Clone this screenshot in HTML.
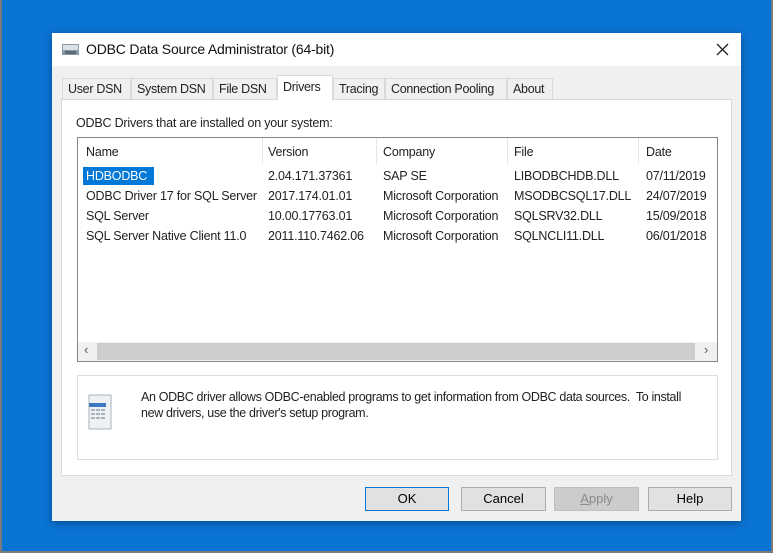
<!DOCTYPE html>
<html><head><style>
*{margin:0;padding:0;box-sizing:border-box}
body{width:773px;height:553px;background:#0a74d4;position:relative;overflow:hidden;font-family:"Liberation Sans",sans-serif;font-size:12.5px;color:#000}
.a{position:absolute}
.win{left:52px;top:33px;width:689px;height:488px;background:#f0f0f0;box-shadow:0 2px 8px rgba(0,0,0,.35)}
.title{left:0;top:0;width:689px;height:33px;background:#fff}
.tab{position:absolute;top:45px;height:21px;border:1px solid #d9d9d9;border-bottom:none;background:#f0f0f0;padding:3px 0 0 5px;font-size:12.5px;color:#222;white-space:nowrap;overflow:hidden;letter-spacing:-0.3px}
.panel{left:9px;top:66px;width:671px;height:377px;background:#fff;border:1px solid #dadada}
.lv{left:77px;top:137px;width:641px;height:225px;border:1px solid #828790;background:#fff}
.col{position:absolute;font-size:12.5px;color:#222;white-space:nowrap;letter-spacing:-0.2px}
.sep{position:absolute;top:0;width:1px;height:26px;background:#e5e5e5}
.btn{position:absolute;top:454px;height:24px;background:#e1e1e1;border:1px solid #adadad;text-align:center;line-height:22px;font-size:13px}
</style></head><body>
<div class="a" style="left:0;top:0;width:2px;height:553px;background:#7a7a7a"></div>
<div class="a" style="right:0;top:0;width:2px;height:553px;background:#7a7a7a"></div>
<div class="a" style="left:0;bottom:0;width:773px;height:2px;background:#7a7a7a"></div>
<div class="a win">
 <div class="a title">
  <svg class="a" style="left:10px;top:9px" width="18" height="14"><rect x="0" y="2" width="17" height="11" fill="#8a9aa8"/><rect x="1" y="3" width="15" height="5" fill="#d9e1e8"/><rect x="3" y="9" width="11" height="3" fill="#5b6b78"/></svg>
  <div class="a" style="left:34px;top:8px;font-size:14px;color:#111;letter-spacing:-0.2px">ODBC Data Source Administrator (64-bit)</div>
  <svg class="a" style="left:664px;top:10px" width="13" height="13"><path d="M1 1L12 12M12 1L1 12" stroke="#222" stroke-width="1.3"/></svg>
 </div>
 <div class="tab" style="left:10px;width:69px">User DSN</div>
 <div class="tab" style="left:79px;width:82px">System DSN</div>
 <div class="tab" style="left:161px;width:64px">File DSN</div>
 <div class="tab" style="left:281px;width:52px">Tracing</div>
 <div class="tab" style="left:333px;width:122px">Connection Pooling</div>
 <div class="tab" style="left:455px;width:46px">About</div>
 <div class="a panel"></div>
 <div class="tab" style="left:225px;top:42px;width:56px;height:25px;background:#fff;border-color:#dadada;z-index:2;padding-top:4px">Drivers</div>
 <div class="btn" style="left:313px;width:84px;border:1px solid #0078d7">OK</div>
 <div class="btn" style="left:409px;width:85px">Cancel</div>
 <div class="btn" style="left:502px;width:85px;background:#ccc;border-color:#bfbfbf;color:#8a8a8a"><u>A</u>pply</div>
 <div class="btn" style="left:596px;width:84px">Help</div>
</div>
<div class="a" style="left:76px;top:116px;font-size:12.5px;color:#222;letter-spacing:-0.2px">ODBC Drivers that are installed on your system:</div>
<div class="a lv">
 <div class="sep" style="left:184px"></div><div class="sep" style="left:298px"></div><div class="sep" style="left:429px"></div><div class="sep" style="left:560px"></div>
 <div class="col" style="left:8px;top:7px">Name</div>
 <div class="col" style="left:190px;top:7px">Version</div>
 <div class="col" style="left:305px;top:7px">Company</div>
 <div class="col" style="left:436px;top:7px">File</div>
 <div class="col" style="left:568px;top:7px">Date</div>
 <div class="a" style="left:5px;top:29px;width:71px;height:18px;background:#0078d7"></div>
 <div class="col" style="left:8px;top:31px;color:#fff">HDBODBC</div>
 <div class="col" style="left:8px;top:51px">ODBC Driver 17 for SQL Server</div>
 <div class="col" style="left:8px;top:71px">SQL Server</div>
 <div class="col" style="left:8px;top:91px">SQL Server Native Client 11.0</div>
 <div class="col" style="left:190px;top:31px">2.04.171.37361</div>
 <div class="col" style="left:190px;top:51px">2017.174.01.01</div>
 <div class="col" style="left:190px;top:71px">10.00.17763.01</div>
 <div class="col" style="left:190px;top:91px">2011.110.7462.06</div>
 <div class="col" style="left:305px;top:31px">SAP SE</div>
 <div class="col" style="left:305px;top:51px">Microsoft Corporation</div>
 <div class="col" style="left:305px;top:71px">Microsoft Corporation</div>
 <div class="col" style="left:305px;top:91px">Microsoft Corporation</div>
 <div class="col" style="left:436px;top:31px">LIBODBCHDB.DLL</div>
 <div class="col" style="left:436px;top:51px">MSODBCSQL17.DLL</div>
 <div class="col" style="left:436px;top:71px">SQLSRV32.DLL</div>
 <div class="col" style="left:436px;top:91px">SQLNCLI11.DLL</div>
 <div class="col" style="left:568px;top:31px">07/11/2019</div>
 <div class="col" style="left:568px;top:51px">24/07/2019</div>
 <div class="col" style="left:568px;top:71px">15/09/2018</div>
 <div class="col" style="left:568px;top:91px">06/01/2018</div>
 <div class="a" style="left:0;top:204px;width:639px;height:19px;background:#f0f0f0"></div>
 <div class="a" style="left:19px;top:205px;width:598px;height:17px;background:#cdcdcd"></div>
 <div class="a" style="left:6px;top:204px;font-size:13px;color:#555">‹</div>
 <div class="a" style="left:626px;top:204px;font-size:13px;color:#555">›</div>
</div>
<div class="a" style="left:77px;top:375px;width:641px;height:85px;border:1px solid #dcdcdc;background:#fff"></div>
<svg class="a" style="left:86px;top:393px" width="28" height="38"><rect x="3" y="2" width="22" height="34" fill="#eef1f4" stroke="#aab3bd"/><rect x="3" y="10" width="17" height="4" fill="#3a78c2"/><g fill="#aab3bd"><rect x="5" y="16" width="4" height="2"/><rect x="10" y="16" width="4" height="2"/><rect x="15" y="16" width="4" height="2"/><rect x="5" y="20" width="4" height="2"/><rect x="10" y="20" width="4" height="2"/><rect x="15" y="20" width="4" height="2"/><rect x="5" y="24" width="4" height="2"/><rect x="10" y="24" width="4" height="2"/><rect x="15" y="24" width="4" height="2"/></g></svg>
<div class="a" style="left:141px;top:389px;width:570px;font-size:12.5px;line-height:16px;color:#222;letter-spacing:-0.35px">An ODBC driver allows ODBC-enabled programs to get information from ODBC data sources.&nbsp; To install<br>new drivers, use the driver's setup program.</div>
</body></html>
